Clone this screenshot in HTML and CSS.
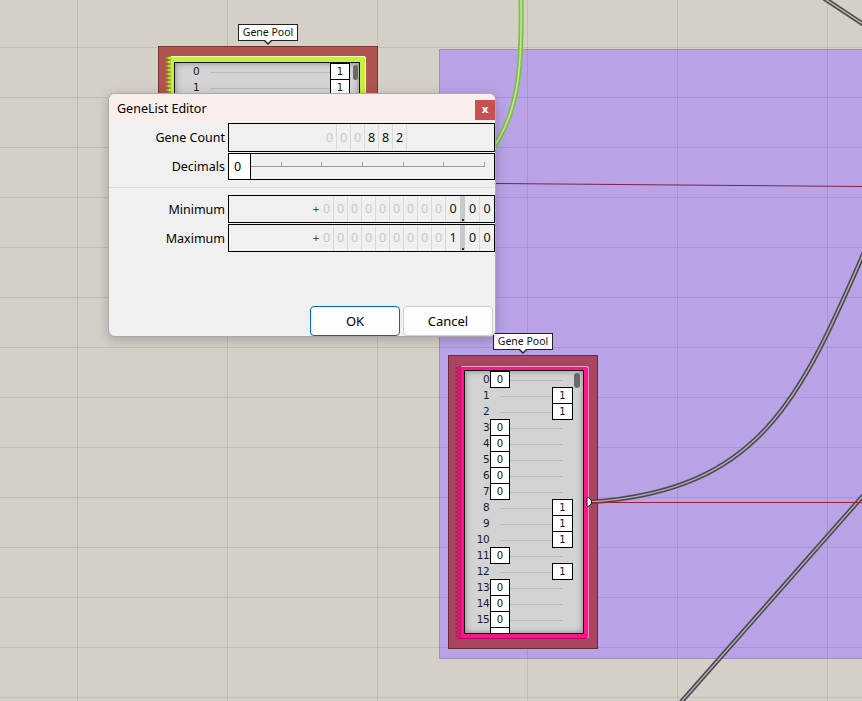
FILE: index.html
```html
<!DOCTYPE html>
<html>
<head>
<meta charset="utf-8">
<title>GeneList Editor</title>
<link rel="stylesheet" href="styles.css">
</head>
<body>
<div class="canvas">
  <svg class="layer" width="862" height="701" viewBox="0 0 862 701">
    <rect width="862" height="701" fill="#d4d0c8"/>
    <rect x="439.5" y="49.5" width="430" height="609" fill="#b9a3e6" stroke="rgba(90,60,150,0.35)"/>
    <g stroke="rgba(0,0,0,0.085)" stroke-width="1">
      <line x1="77.5" y1="0" x2="77.5" y2="701"/>
      <line x1="227.5" y1="0" x2="227.5" y2="701"/>
      <line x1="377.5" y1="0" x2="377.5" y2="701"/>
      <line x1="527.5" y1="0" x2="527.5" y2="701"/>
      <line x1="677.5" y1="0" x2="677.5" y2="701"/>
      <line x1="827.5" y1="0" x2="827.5" y2="701"/>
      <line x1="0" y1="47.5" x2="862" y2="47.5"/>
      <line x1="0" y1="97.5" x2="862" y2="97.5"/>
      <line x1="0" y1="147.5" x2="862" y2="147.5"/>
      <line x1="0" y1="197.5" x2="862" y2="197.5"/>
      <line x1="0" y1="247.5" x2="862" y2="247.5"/>
      <line x1="0" y1="297.5" x2="862" y2="297.5"/>
      <line x1="0" y1="347.5" x2="862" y2="347.5"/>
      <line x1="0" y1="397.5" x2="862" y2="397.5"/>
      <line x1="0" y1="447.5" x2="862" y2="447.5"/>
      <line x1="0" y1="497.5" x2="862" y2="497.5"/>
      <line x1="0" y1="547.5" x2="862" y2="547.5"/>
      <line x1="0" y1="597.5" x2="862" y2="597.5"/>
      <line x1="0" y1="647.5" x2="862" y2="647.5"/>
      <line x1="0" y1="697.5" x2="862" y2="697.5"/>
    </g>
  </svg>

  <div class="node node-a">
    <div class="tag">Gene Pool</div>
    <div class="shell">
      <div class="panel">
        <svg class="zig" width="6" height="230" viewBox="0 0 6 230">
          <defs>
            <pattern id="zzA" width="6" height="4" patternUnits="userSpaceOnUse">
              <polygon points="6,0 0.5,2 6,4" fill="#c6ef3e" stroke="#7f9c18" stroke-width="0.6"/>
            </pattern>
          </defs>
          <rect width="6" height="230" fill="url(#zzA)"/>
        </svg>
        <div class="pbody">
          <div class="list">
            <div class="rows">
              <div class="row"><span class="idx">0</span><span class="cell r">1</span></div>
              <div class="row"><span class="idx">1</span><span class="cell r">1</span></div>
            </div>
            <div class="scroll"><div class="thumb"></div></div>
          </div>
        </div>
      </div>
    </div>
  </div>

  <div class="node node-b">
    <div class="tag">Gene Pool</div>
    <div class="shell">
      <div class="panel">
        <svg class="zig" width="6" height="273" viewBox="0 0 6 273">
          <defs>
            <pattern id="zzB" width="6" height="4" patternUnits="userSpaceOnUse">
              <polygon points="6,0 0.5,2 6,4" fill="#f81885" stroke="#a8004f" stroke-width="0.6"/>
            </pattern>
          </defs>
          <rect width="6" height="273" fill="url(#zzB)"/>
        </svg>
        <div class="pbody">
          <div class="list">
            <div class="rows">
              <div class="row"><span class="idx">0</span><span class="cell l">0</span></div>
              <div class="row"><span class="idx">1</span><span class="cell r">1</span></div>
              <div class="row"><span class="idx">2</span><span class="cell r">1</span></div>
              <div class="row"><span class="idx">3</span><span class="cell l">0</span></div>
              <div class="row"><span class="idx">4</span><span class="cell l">0</span></div>
              <div class="row"><span class="idx">5</span><span class="cell l">0</span></div>
              <div class="row"><span class="idx">6</span><span class="cell l">0</span></div>
              <div class="row"><span class="idx">7</span><span class="cell l">0</span></div>
              <div class="row"><span class="idx">8</span><span class="cell r">1</span></div>
              <div class="row"><span class="idx">9</span><span class="cell r">1</span></div>
              <div class="row"><span class="idx">10</span><span class="cell r">1</span></div>
              <div class="row"><span class="idx">11</span><span class="cell l">0</span></div>
              <div class="row"><span class="idx">12</span><span class="cell r">1</span></div>
              <div class="row"><span class="idx">13</span><span class="cell l">0</span></div>
              <div class="row"><span class="idx">14</span><span class="cell l">0</span></div>
              <div class="row"><span class="idx">15</span><span class="cell l">0</span></div>
              <div class="row"><span class="idx"></span><span class="cell l"></span></div>
            </div>
            <div class="scroll"><div class="thumb"></div></div>
          </div>
        </div>
      </div>
    </div>
  </div>

  <svg class="layer wires" width="862" height="701" viewBox="0 0 862 701">
    <g fill="none" stroke-linecap="butt">
      <path d="M521,-2 C522,60 520,105 497,142 L470,180" stroke="#7cc140" stroke-width="5"/>
      <path d="M521,-2 C522,60 520,105 497,142 L470,180" stroke="#c9dfa6" stroke-width="1.6"/>

      <path d="M495,183.5 L862,186.5" stroke="#7c2343" stroke-width="1"/>

      <path d="M591,502 C760,490 800,400 866,248" stroke="#4a4a4c" stroke-width="4.6"/>
      <path d="M591,502 C760,490 800,400 866,248" stroke="#aea8ba" stroke-width="1.5"/>

      <path d="M660,726 L884,472" stroke="#4a4a4c" stroke-width="4.6"/>
      <path d="M660,726 L884,472" stroke="#aea8ba" stroke-width="1.5"/>

      <path d="M816,-7 L872,30" stroke="#4a4a4c" stroke-width="4.6"/>
      <path d="M816,-7 L872,30" stroke="#b8b4ae" stroke-width="1.5"/>

      <path d="M591,502.5 L862,502.5" stroke="#9a2231" stroke-width="1.2"/>
    </g>
    <path d="M587,497.5 A4.5,4.5 0 0 1 587,506.5 Z" fill="#fff" stroke="#111" stroke-width="1"/>
  </svg>

  <div class="dialog">
    <div class="titlebar">
      <span class="title">GeneList Editor</span>
      <span class="close">x</span>
    </div>
    <div class="form">
      <div class="frow r-count">
        <label>Gene Count</label>
        <div class="field digits">
          <span class="d">0</span><span class="d">0</span><span class="d">0</span><span class="d on">8</span><span class="d on">8</span><span class="d on">2</span>
        </div>
      </div>
      <div class="frow r-dec">
        <label>Decimals</label>
        <div class="field slider">
          <span class="dec-val">0</span>
          <svg class="track" width="243" height="25" viewBox="0 0 243 25">
            <g stroke="#9a9a9a" stroke-width="1" fill="none">
              <line x1="0" y1="12.5" x2="234" y2="12.5"/>
              <line x1="30.5" y1="8" x2="30.5" y2="12"/>
              <line x1="70.5" y1="8" x2="70.5" y2="12"/>
              <line x1="111.5" y1="8" x2="111.5" y2="12"/>
              <line x1="152.5" y1="8" x2="152.5" y2="12"/>
              <line x1="192.5" y1="8" x2="192.5" y2="12"/>
              <line x1="233.5" y1="8" x2="233.5" y2="12"/>
            </g>
          </svg>
        </div>
      </div>
    </div>
    <div class="sep"></div>
    <div class="form">
      <div class="frow r-num">
        <label>Minimum</label>
        <div class="field num">
          <span class="plus">+</span>
          <span class="d">0</span><span class="d">0</span><span class="d">0</span><span class="d">0</span><span class="d">0</span><span class="d">0</span><span class="d">0</span><span class="d">0</span><span class="d">0</span><span class="d on nb">0</span>
          <span class="pt"></span>
          <span class="d on">0</span><span class="d on nb">0</span>
        </div>
      </div>
      <div class="frow r-num">
        <label>Maximum</label>
        <div class="field num">
          <span class="plus">+</span>
          <span class="d">0</span><span class="d">0</span><span class="d">0</span><span class="d">0</span><span class="d">0</span><span class="d">0</span><span class="d">0</span><span class="d">0</span><span class="d">0</span><span class="d on nb">1</span>
          <span class="pt"></span>
          <span class="d on">0</span><span class="d on nb">0</span>
        </div>
      </div>
    </div>
    <div class="spacer"></div>
    <div class="buttons">
      <button class="btn ok">OK</button>
      <button class="btn">Cancel</button>
    </div>
  </div>
</div>
</body>
</html>
```

FILE: styles.css
```css
* { box-sizing: border-box; }
html, body { margin: 0; padding: 0; }
body {
  width: 862px;
  height: 701px;
  overflow: hidden;
  background: #d4d0c8;
  font-family: "Noto Sans", "Open Sans", sans-serif;
}
.canvas {
  position: relative;
  width: 862px;
  height: 701px;
  overflow: hidden;
}
.layer {
  position: absolute;
  left: 0;
  top: 0;
  display: block;
}
.wires { pointer-events: none; }

/* ---------- Gene pool nodes ---------- */
.node {
  position: absolute;
  display: flex;
  flex-direction: column;
  align-items: center;
}
.node-a { left: 158px; top: 24px; }
.node-b { left: 448px; top: 333px; }

.tag {
  position: relative;
  height: 17px;
  padding: 0 4px;
  margin-bottom: 5px;
  background: #fff;
  border: 1px solid #222;
  color: #111;
  font-size: 10.5px;
  line-height: 15px;
  white-space: nowrap;
}
.tag::before {
  content: "";
  position: absolute;
  left: 50%;
  top: 100%;
  margin-left: -5px;
  border-left: 5px solid transparent;
  border-right: 5px solid transparent;
  border-top: 5px solid #222;
}
.tag::after {
  content: "";
  position: absolute;
  left: 50%;
  top: calc(100% - 1px);
  margin-left: -4px;
  border-left: 4px solid transparent;
  border-right: 4px solid transparent;
  border-top: 4px solid #fff;
}

.shell { border: 1px solid #6b2b3a; }
.node-a .shell {
  width: 220px;
  height: 260px;
  background: #b0544f;
  border-color: #74352f;
  padding: 9px 0 0 6px;
}
.node-b .shell {
  width: 150px;
  height: 294px;
  background: #a8465f;
  border-color: #6a2a3c;
  padding: 10px 0 0 6px;
}

.panel { display: flex; }
.node-a .panel { width: 201px; height: 230px; }
.node-b .panel { width: 134px; height: 273px; }

.zig { flex: none; display: block; }

.pbody {
  flex: 1;
  border-radius: 0 3px 3px 0;
}
.node-a .pbody {
  padding: 6px 6px 5px 3px;
  background: #c6ef3e;
  box-shadow: inset 0 1px 0 #eaffb0, inset -1px 0 0 #e0ff90, inset 0 -1px 0 #7f9c18;
}
.node-b .pbody {
  padding: 4px 5px 5px 3px;
  background: #f81885;
  box-shadow: inset 0 1px 0 #ff9ccf, inset -1px 0 0 #ff86c4, inset 0 -1px 0 #b0005a;
}

.list {
  display: flex;
  height: 100%;
  border: 1px solid #111;
  background: #d3d3d3;
  box-shadow: inset 0 0 6px rgba(0, 0, 0, 0.38);
  overflow: hidden;
}
.rows { flex: none; }
.node-a .rows { width: 177px; }
.node-b .rows { width: 108px; }

.row {
  display: grid;
  height: 16px;
  background-image: linear-gradient(#bababa, #bababa);
  background-repeat: no-repeat;
  background-position: 35px 9px;
}
.node-a .row {
  grid-template-columns: 26px 20px 109px 20px;
  background-size: 130px 1px;
}
.node-b .row {
  grid-template-columns: 25px 20px 42px 21px;
  background-size: 63px 1px;
}
.idx {
  grid-column: 1;
  text-align: right;
  font: 10.5px/17px "DejaVu Sans", "Liberation Sans", sans-serif;
  letter-spacing: -0.6px;
  color: #1a1a1a;
  white-space: nowrap;
}
.node-a .idx { padding-right: 2px; }
.node-b .idx { padding-right: 1px; }

.cell {
  grid-row: 1;
  height: 17px;
  background: #fff;
  border: 1px solid #000;
  font: 10px/15px "DejaVu Sans", "Liberation Sans", sans-serif;
  text-align: center;
  color: #111;
}
.cell.l { grid-column: 2; }
.cell.r { grid-column: 4; }

.scroll { flex: none; padding-top: 2px; }
.node-a .scroll { width: 7px; padding-left: 1px; }
.node-b .scroll { width: 10px; padding-left: 1px; }
.thumb {
  height: 15px;
  border-radius: 3px;
  background: #6a6a6a;
}
.node-a .thumb { width: 5px; }
.node-b .thumb { width: 6px; }

/* ---------- Dialog ---------- */
.dialog {
  position: absolute;
  left: 108px;
  top: 93px;
  width: 388px;
  height: 244px;
  display: flex;
  flex-direction: column;
  background: #f0f0f0;
  border: 1px solid #ababab;
  border-radius: 7px;
  box-shadow: 0 3px 12px rgba(0, 0, 0, 0.22);
  overflow: hidden;
  color: #000;
  font-family: "Noto Sans", "Open Sans", sans-serif;
}
.titlebar {
  flex: none;
  height: 29px;
  display: flex;
  align-items: flex-start;
  justify-content: space-between;
  background: #f8efec;
}
.title {
  padding-left: 8px;
  font-size: 12.5px;
  line-height: 29px;
}
.close {
  width: 20px;
  height: 20px;
  margin-top: 6px;
  background: #c75050;
  color: #fff;
  font: bold 11px/19px "DejaVu Sans", sans-serif;
  text-align: center;
}

.form { display: flex; flex-direction: column; gap: 1px; }
.frow {
  display: grid;
  grid-template-columns: 119px 267px;
  align-items: center;
}
.frow label {
  text-align: right;
  padding-right: 3px;
  font-size: 12.5px;
  white-space: nowrap;
}
.field {
  display: flex;
  border: 1px solid #000;
  background: #f0f0f0;
}
.r-count .field { height: 29px; padding-left: 94px; }
.r-dec .field { height: 27px; }
.r-num .field { height: 28px; justify-content: flex-end; }

.d {
  width: 14px;
  border-right: 1px solid #d9d9d9;
  text-align: center;
  font-size: 12.5px;
  color: #c8c8c8;
}
.r-count .d { line-height: 27px; }
.r-num .d { line-height: 26px; }
.d.on { color: #111; }
.d.nb { border-right: 0; }

.plus {
  align-self: center;
  font: 9.5px/12px "DejaVu Sans", sans-serif;
  color: #333;
  margin-right: 0;
}
.pt {
  position: relative;
  width: 5px;
  margin-right: 1px;
  background: #c9c9c9;
}
.pt::after {
  content: "";
  position: absolute;
  right: 1px;
  bottom: 1px;
  width: 2px;
  height: 2px;
  background: #333;
}

.dec-val {
  width: 22px;
  padding-left: 5px;
  background: #fff;
  border-right: 1px solid #000;
  font-size: 12.5px;
  line-height: 25px;
}
.track { display: block; flex: none; }

.sep {
  flex: none;
  height: 1px;
  margin: 7px 0;
  background: #dedede;
}
.spacer { flex: 1; }
.buttons {
  flex: none;
  display: flex;
  justify-content: flex-end;
  gap: 3px;
  padding-right: 2px;
}
.btn {
  width: 90px;
  height: 30px;
  padding: 0;
  border: 1px solid #d0d0d0;
  border-radius: 4px;
  background: #fdfdfd;
  color: #000;
  font: 13px "Noto Sans", "Open Sans", sans-serif;
}
.btn.ok { border-color: #0067c0; }
```
